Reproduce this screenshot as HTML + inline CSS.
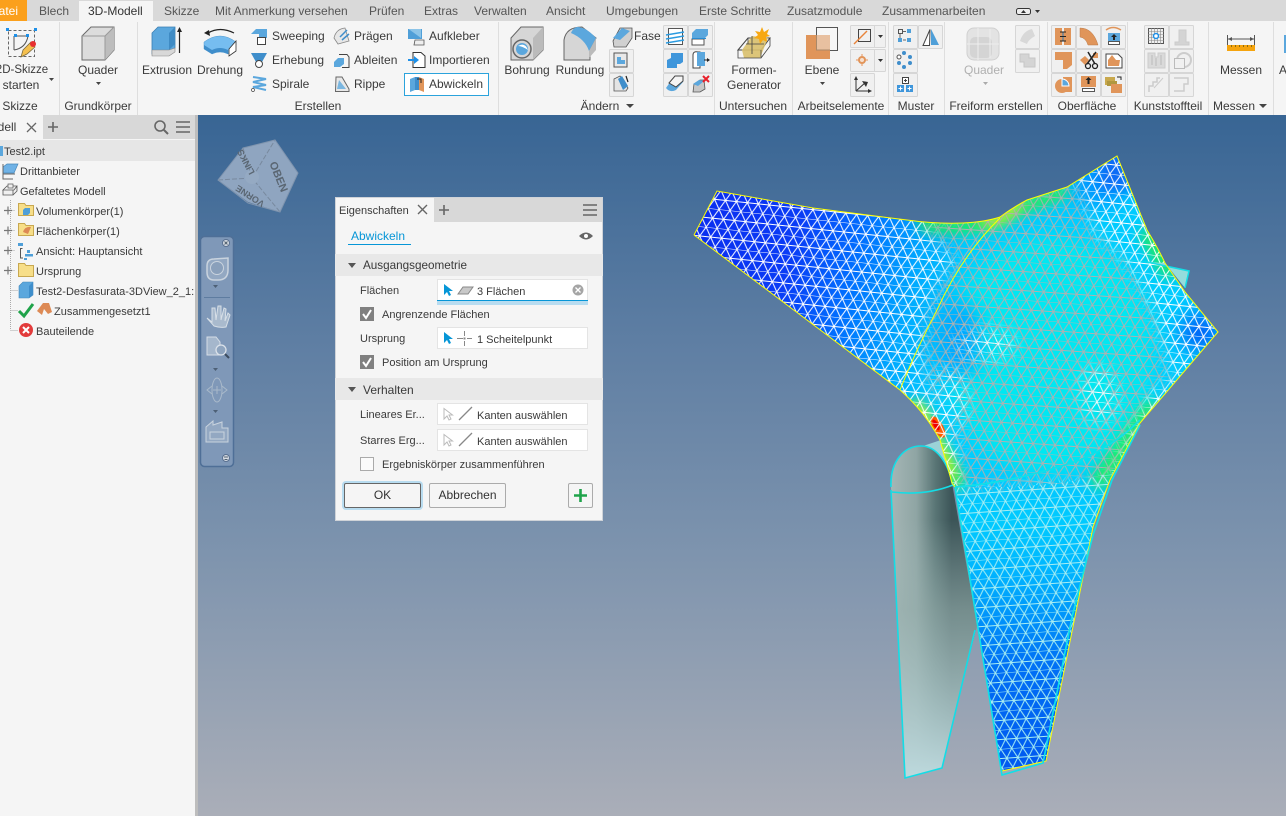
<!DOCTYPE html>
<html><head><meta charset="utf-8">
<style>
html,body{margin:0;padding:0;width:1286px;height:816px;overflow:hidden;background:#f5f5f5}
*{box-sizing:border-box}
body{position:relative;font-family:"Liberation Sans",sans-serif;font-size:12px;color:#3a3a3a}
.a{position:absolute}
.t{position:absolute;white-space:nowrap;line-height:16px;height:16px}
.s{font-size:11px;margin-top:1px}
.c{transform:translateX(-50%)}
.tab{color:#555}
.sec{position:absolute;left:335px;width:268px;height:22px;background:#e8e8e8}
.inp{position:absolute;left:437px;width:151px;height:22px;background:#fff;border:1px solid #e4e4e4}
.btn{position:absolute;background:#f5f5f5;border:1px solid #ababab;border-radius:2px;text-align:center;line-height:23px;height:25px;color:#333}
svg{position:absolute;left:0;top:0;overflow:hidden}
</style></head><body>

<!-- viewport background -->
<div class="a" style="left:198px;top:115px;width:1088px;height:701px;background:linear-gradient(#386594 0%,#5e7ea3 32%,#7b92ad 60%,#aaaeb8 100%)"></div>
<div class="a" style="left:195px;top:115px;width:3px;height:701px;background:#bdbdbd"></div>

<svg width="1286" height="816" viewBox="0 0 1286 816">
<defs>
<clipPath id="mc"><path d="M717,191 L813,208 L907,220 Q935,224 963,223 Q985,222 1000,217 Q1012,208 1027,200 L1067,187 L1117,156 L1147,230 Q1158,248 1165,263 L1185,292 L1218,332 L1140,423 L1110,480 L1093,527 L1046,761 L1002,771 L955,487 L952,483 L940,440 Q925,412 900,390 L694,235 Z"/></clipPath>
<linearGradient id="wg" gradientUnits="userSpaceOnUse" x1="700" y1="230" x2="960" y2="300">
<stop offset="0" stop-color="#0a2ef0"/><stop offset=".35" stop-color="#0a3cf6"/><stop offset=".6" stop-color="#0072ff"/><stop offset=".82" stop-color="#00aaff"/><stop offset="1" stop-color="#00ccff"/></linearGradient>
<linearGradient id="sg" gradientUnits="userSpaceOnUse" x1="0" y1="490" x2="0" y2="770">
<stop offset="0" stop-color="#00d8ff"/><stop offset=".3" stop-color="#00b4ff"/><stop offset=".62" stop-color="#0070f5"/><stop offset="1" stop-color="#0058f0"/></linearGradient>
<filter id="b6" x="-50%" y="-50%" width="200%" height="200%"><feGaussianBlur stdDeviation="6"/></filter>
<filter id="b10" x="-50%" y="-50%" width="200%" height="200%"><feGaussianBlur stdDeviation="10"/></filter>
<pattern id="pw" width="11" height="19" patternUnits="userSpaceOnUse" patternTransform="rotate(6)">
<path d="M0,0H11M0,9.500H11M0,0L5.500,9.500L0,19M11,0L5.500,9.500L11,19" fill="none" stroke="#fff" stroke-width="1"/></pattern>
<pattern id="pg" width="11" height="19" patternUnits="userSpaceOnUse" patternTransform="rotate(4)">
<path d="M0,0H11M0,9.500H11M0,0L5.500,9.500L0,19M11,0L5.500,9.500L11,19" fill="none" stroke="#b0b0b0" stroke-width="1"/></pattern>
<pattern id="pc" width="11" height="19" patternUnits="userSpaceOnUse" patternTransform="rotate(-4)">
<path d="M0,0H11M0,9.500H11M0,0L5.500,9.500L0,19M11,0L5.500,9.500L11,19" fill="none" stroke="#a8eef2" stroke-width="1"/></pattern>
<mask id="mg" maskUnits="userSpaceOnUse" x="680" y="140" width="560" height="640">
<rect x="680" y="140" width="560" height="640" fill="#000"/>
<g filter="url(#b6)">
<ellipse cx="1040" cy="350" rx="115" ry="130" fill="#fff"/>
<path d="M925,225 L1075,180 L1100,250 L1000,310Z" fill="#fff"/>
<path d="M1130,400L1150,300L1170,380Z" fill="#fff"/>
<path d="M960,440L1130,430L1110,480L960,490Z" fill="#fff"/>
<ellipse cx="950" cy="400" rx="14" ry="30" fill="#000"/>
<ellipse cx="1098" cy="395" rx="16" ry="24" fill="#000"/>
<ellipse cx="985" cy="345" rx="26" ry="12" fill="#000"/>
</g></mask>
<mask id="mw" maskUnits="userSpaceOnUse" x="680" y="140" width="560" height="640">
<rect x="680" y="140" width="560" height="640" fill="#fff"/>
<g filter="url(#b6)">
<ellipse cx="1040" cy="350" rx="115" ry="130" fill="#000"/>
<path d="M925,225 L1075,180 L1100,250 L1000,310Z" fill="#000"/>
<path d="M1130,400L1150,300L1170,380Z" fill="#000"/>
<path d="M960,440L1130,430L1110,480L960,490Z" fill="#000"/>
<ellipse cx="950" cy="400" rx="14" ry="30" fill="#fff"/>
<ellipse cx="1098" cy="395" rx="16" ry="24" fill="#fff"/>
<ellipse cx="985" cy="345" rx="26" ry="12" fill="#fff"/>
</g>
<path d="M945,487 Q1060,490 1120,470 L1120,780 L990,780Z" fill="#000"/>
</mask>
<linearGradient id="cy" gradientUnits="userSpaceOnUse" x1="890" y1="0" x2="965" y2="0">
<stop offset="0" stop-color="#a6b7b6"/><stop offset=".35" stop-color="#8fa5a4"/><stop offset=".6" stop-color="#5a7676"/><stop offset=".82" stop-color="#3c5558"/><stop offset="1" stop-color="#3d5658"/></linearGradient>
<linearGradient id="cy2" gradientUnits="userSpaceOnUse" x1="0" y1="520" x2="0" y2="775">
<stop offset="0" stop-color="#a4bcbc" stop-opacity="0"/><stop offset=".35" stop-color="#9ab2b0" stop-opacity=".6"/><stop offset="1" stop-color="#bcd8dc" stop-opacity="1"/></linearGradient>
<rect id="b" width="24" height="23" rx="1" fill="#f0f0f0" stroke="#d6d6d6"/>
</defs>

<!-- shaded cylinder -->
<path d="M923,446 L941,440 L955,487 L945,470Z" fill="#9bd3d7"/>
<path d="M891,487 C890,460 905,446 921,446 C936,446 948,462 952,483 L977,625 L942,768 L905,778 Z" fill="url(#cy)"/>
<path d="M891,487 C890,460 905,446 921,446 C936,446 948,462 952,483 L977,625 L942,768 L905,778 Z" fill="url(#cy2)"/>
<path d="M891,487 C890,460 905,446 921,446 C936,446 948,462 952,483 L955,487 M891,490 L905,778 L942,768 L975,630" fill="none" stroke="#13dde6" stroke-width="1.600"/>
<path d="M892,492 Q925,496 953,485" fill="none" stroke="#13dde6" stroke-width="1.600"/>

<!-- mesh surface -->
<g clip-path="url(#mc)">
<rect x="680" y="140" width="560" height="660" fill="url(#wg)"/>
<g filter="url(#b10)">
<rect x="960" y="160" width="280" height="340" fill="#00ccff"/>
<path d="M935,480 L1140,460 L1060,790 L990,790Z" fill="#00c8ff"/>
<ellipse cx="1050" cy="355" rx="105" ry="120" fill="#00e8f2"/>
<ellipse cx="1100" cy="180" rx="30" ry="28" fill="#0098ff"/>
<ellipse cx="1200" cy="332" rx="22" ry="22" fill="#0060f8"/>
<ellipse cx="960" cy="340" rx="22" ry="40" fill="#00a8ff"/>
</g>
<rect x="940" y="515" width="190" height="270" fill="url(#sg)" filter="url(#b6)"/>
<path d="M1100,150 L1125,150 L1132,190 L1100,190Z" fill="#0a6cf5" filter="url(#b6)"/>
<g filter="url(#b6)" fill="none" stroke-linecap="round">
<path d="M925,224 Q975,232 1005,216" stroke="#22ee55" stroke-width="14"/>
<path d="M1000,216 L1062,192" stroke="#33ee44" stroke-width="12"/>
<path d="M1147,235 L1168,272" stroke="#22ee44" stroke-width="12"/>
<path d="M1150,410 L1100,480" stroke="#22ee66" stroke-width="18"/>
<path d="M915,410 L955,480" stroke="#55f040" stroke-width="18"/>
</g>
<g filter="url(#b6)" fill="none" stroke-linecap="round">
<path d="M985,222 Q1005,218 1018,204" stroke="#e8f020" stroke-width="9"/>
<path d="M918,408 L948,470" stroke="#eef020" stroke-width="9"/>
</g>
<ellipse cx="938" cy="427" rx="5" ry="12" transform="rotate(-30 938 427)" fill="#ff5a00"/>
<ellipse cx="936" cy="425" rx="2.500" ry="6" transform="rotate(-30 936 425)" fill="#f00000"/>
<rect x="680" y="140" width="560" height="660" fill="url(#pw)" mask="url(#mw)"/>
<rect x="680" y="140" width="560" height="660" fill="url(#pg)" mask="url(#mg)"/>
<path d="M945,487 Q1060,490 1120,470 L1120,780 L990,780Z" fill="url(#pc)"/>
</g>

<!-- small teal fan on right corner -->
<path d="M1147,262 L1189,271 L1185,288 L1165,263Z" fill="#95dcdc"/>
<path d="M1147,262 L1189,271 L1185,288" fill="none" stroke="#13dde6" stroke-width="1.500"/>
<path d="M1147,262 Q1090,255 1065,265" fill="none" stroke="#10e2ea" stroke-width="1" opacity=".6"/>

<!-- outlines -->
<path d="M694,235 L717,191 L813,208 L907,220 Q935,224 963,223 Q985,222 1000,217 Q1012,208 1027,200 L1067,187 L1117,156 L1147,230 Q1158,248 1165,263 L1185,292 L1218,332 L1140,423 L1110,480 L1093,527 L1046,761 L1002,771 M955,487 L952,483 L940,440 Q925,412 900,390 L694,235" fill="none" stroke="#ffff00" stroke-width="1"/>
<path d="M1000,218 Q962,255 937,310 Q915,352 900,390" fill="none" stroke="#ffff00" stroke-width="1"/>
<path d="M955,487 Q1013,483 1080,460 Q1115,445 1140,420" fill="none" stroke="#10e0e8" stroke-width="1.600"/>
<path d="M955,487 L1002,775 L1043,763 L1072,617 L1093,535 L1112,480 L1140,425" fill="none" stroke="#10e0e8" stroke-width="1.600"/>

<!-- view cube -->
<g>
<path d="M218,180 L243,148 L275,140 L298,173 L280,212 L248,202Z" fill="#8fa5c0"/>
<path d="M243,148 L252,178 L280,212 M218,180 L252,178 L275,140" fill="none" stroke="#78899e" stroke-width="1" stroke-dasharray="5 2"/>
<path d="M218,180 L243,148 L275,140 L298,173 L280,212 L248,203Z" fill="none" stroke="#7f94ae" stroke-width="1"/>
<circle cx="252" cy="177" r="7" fill="#95aac3"/>
<text x="278" y="177" transform="rotate(68 278 177)" text-anchor="middle" dominant-baseline="central" font-size="11" font-weight="bold" fill="#5a6672" font-family="Liberation Sans">OBEN</text>
<text x="246" y="162" transform="rotate(-118 246 162)" text-anchor="middle" dominant-baseline="central" font-size="9" font-weight="bold" fill="#5a6672" font-family="Liberation Sans">LINKS</text>
<text x="250" y="196" transform="rotate(213 250 196)" text-anchor="middle" dominant-baseline="central" font-size="9" font-weight="bold" fill="#5a6672" font-family="Liberation Sans">VORNE</text>
</g>

<!-- nav bar -->
<g>
<rect x="200.500" y="236.500" width="33" height="230" rx="4" fill="#7f98b8" stroke="#4f6f97" stroke-width="1.500"/>
<circle cx="226" cy="243" r="3.500" fill="#d7dde4" stroke="#5a7090"/>
<path d="M224.500,241.500l3,3m0,-3l-3,3" stroke="#50606f" stroke-width="1"/>
<path d="M207,266 Q207,259 214,259 L228,258 L228,270 Q228,280 218,280 L214,280 Q207,280 207,272Z" fill="#93a8c2" stroke="#c9d3de" stroke-width="1.500"/>
<circle cx="217" cy="268" r="6.500" fill="#8aa0bb" stroke="#c9d3de"/>
<path d="M213,285h5l-2.500,3z" fill="#4d6076"/>
<path d="M204,297.500H230" stroke="#5e7ca0"/>
<path d="M207,318 L212,322 L212,308 L215,308 L216,320 L218,306 L221,306 L221,320 L224,308 L226,309 L225,321 L228,313 L230,315 L226,327 Q220,328 214,326Z" fill="#a9bacd" stroke="#d7dfe7" stroke-width="1"/>
<path d="M207,337 H216 L220,342 V355 H207Z" fill="#a5b7cc" stroke="#d5dde6"/>
<circle cx="221" cy="350" r="5" fill="#8fa5bf" stroke="#dbe2ea" stroke-width="1.300"/>
<path d="M225,354l4,4" stroke="#3d4d60" stroke-width="2"/>
<path d="M213,368h5l-2.500,3z" fill="#4d6076"/>
<ellipse cx="217" cy="390" rx="5" ry="12" fill="none" stroke="#a9b9ca"/><path d="M212,386 L207,390 L212,394 M222,386 L227,390 L222,394 M217,386V394M213,390H221" fill="none" stroke="#a9b9ca"/>
<path d="M213,410h5l-2.500,3z" fill="#4d6076"/>
<path d="M206,427 L213,421 V425 L222,422 V428 H228 V442 H206Z" fill="#93a8c2" stroke="#c9d3de"/>
<rect x="210" y="432" width="14" height="7" fill="none" stroke="#c9d3de"/>
<circle cx="226" cy="458" r="3.500" fill="#d7dde4" stroke="#5a7090"/>
<path d="M224,457h4M224.500,459.500h3" stroke="#50606f"/>
</g>
</svg>

<!-- ribbon -->
<div class="a" style="left:0;top:0;width:1286px;height:21px;background:#d9d9d9"></div>
<div class="a" style="left:0;top:21px;width:1286px;height:94px;background:#f5f5f5"></div>
<div class="a" style="left:0;top:0;width:27px;height:21px;background:#fba01c"></div>
<div class="t" style="left:-10px;top:3px;color:#fff">Datei</div>
<div class="a" style="left:79px;top:1px;width:74px;height:21px;background:#f5f5f5"></div>
<div class="t tab" style="left:39px;top:3px">Blech</div>
<div class="t" style="left:88px;top:3px;color:#333">3D-Modell</div>
<div class="t tab" style="left:164px;top:3px">Skizze</div>
<div class="t tab" style="left:215px;top:3px">Mit Anmerkung versehen</div>
<div class="t tab" style="left:369px;top:3px">Prüfen</div>
<div class="t tab" style="left:424px;top:3px">Extras</div>
<div class="t tab" style="left:474px;top:3px">Verwalten</div>
<div class="t tab" style="left:546px;top:3px">Ansicht</div>
<div class="t tab" style="left:606px;top:3px">Umgebungen</div>
<div class="t tab" style="left:699px;top:3px">Erste Schritte</div>
<div class="t tab" style="left:787px;top:3px">Zusatzmodule</div>
<div class="t tab" style="left:882px;top:3px">Zusammenarbeiten</div>

<svg width="1286" height="115" viewBox="0 0 1286 115" style="height:115px">
<rect x="1016.500" y="8.500" width="14" height="6" rx="2" fill="#eee" stroke="#333"/><path d="M1021,13l2.500,-3l2.500,3z" fill="#333"/><path d="M1035,10h5l-2.500,3z" fill="#333"/>
<g stroke="#dedede"><path d="M59.500,22V115M137.500,22V115M498.500,22V115M714.500,22V115M792.500,22V115M888.500,22V115M944.500,22V115M1047.500,22V115M1127.500,22V115M1208.500,22V115M1273.500,22V115"/></g>

<!-- 2D Skizze -->
<rect x="8.500" y="30.500" width="26" height="26" fill="none" stroke="#666" stroke-dasharray="3 2"/>
<path d="M14,36 H28 M14,36 V50 M14,50 Q26,48 28,36" fill="none" stroke="#555"/>
<g fill="#1e90e8"><rect x="6" y="28" width="3" height="3"/><rect x="14" y="34" width="3" height="3"/><rect x="26" y="34" width="3" height="3"/><rect x="34" y="28" width="3" height="3"/></g>
<path d="M21,57 L23,50 L31,42 L35,47 L27,54Z" fill="#f5c04e" stroke="#7a6a40" stroke-width=".8"/>
<circle cx="33" cy="44" r="3" fill="#e73030"/>
<path d="M49,78h5l-2.500,3z" fill="#444"/>

<!-- Quader -->
<path d="M82,36 L91,27 H114 V50 L105,60 H82Z" fill="#dcdcdc" stroke="#6a6a6a"/>
<path d="M105,36 L114,27 V50 L105,60Z" fill="#bdbdbd"/>
<path d="M105,36 H82 M105,36 V60 M105,36 L114,27" fill="none" stroke="#9a9a9a"/>
<path d="M96,82h5l-2.500,3z" fill="#444"/>

<!-- Extrusion -->
<path d="M152,50 L152,33 L158,27 L175,27 L175,48 L169,54 L152,54Z" fill="#5ba7dd" stroke="#3b7fb3" stroke-width=".8"/>
<path d="M169,33 V50 L175,44 V27Z" fill="#3f8bc4"/>
<path d="M152,50 H169 L175,48 V52 L169,56 H152Z" fill="#d8d8d8" stroke="#888" stroke-width=".6"/>
<path d="M179.500,53 V30" stroke="#222" stroke-width="1.200"/><path d="M177,32 L179.500,27 L182,32Z" fill="#222"/>

<!-- Drehung -->
<path d="M208,33 Q220,26 234,33" fill="none" stroke="#222" stroke-width="1.200"/><path d="M209,30 L204,33 L210,36Z" fill="#222"/>
<path d="M204,42 Q220,30 236,42 V45 L228,54 Q220,50 212,54 L204,49Z" fill="#76bdf0" stroke="#5a9dd0" stroke-width=".5"/>
<path d="M204,49 L212,54 Q220,50 228,54 L228,50 Q220,46 212,50 L204,45Z" fill="#3f8ecb"/>
<path d="M229,49 L236,41 V51 L229,56Z" fill="#fff" stroke="#333" stroke-width=".8"/>

<!-- small icons -->
<path d="M251,34 L256,29 H267 V38 H259 V34Z" fill="#5ba7dd"/><rect x="257.500" y="37.500" width="8" height="7" fill="#fff" stroke="#444"/>
<path d="M251,53 H267 L262,62 H256Z" fill="#3f8ecb"/><circle cx="259" cy="64" r="3.500" fill="#fff" stroke="#444"/>
<path d="M253,77 L266,79 L253,82 L266,85 L253,87 L266,90" fill="none" stroke="#5ba7dd" stroke-width="2"/><circle cx="253" cy="90" r="1.500" fill="#fff" stroke="#444" stroke-width=".7"/>
<path d="M334,38 Q336,29 345,28 L349,41 L338,44Z" fill="#e7e7e7" stroke="#888" stroke-width=".8"/><path d="M340,37 L347,30 M342,40 L349,34" stroke="#3f8ecb" stroke-width="1.500"/>
<path d="M339,54.500 H347 L349,57 V67.500 H342" fill="none" stroke="#444"/><path d="M334,62 L338,58 H344 V64 L340,67 H334Z" fill="#5ba7dd"/>
<path d="M335.500,91.500 L336,77 H342 L349,89 V91.500Z" fill="#e8e8e8" stroke="#666"/><path d="M339,80 L346,89 H337Z" fill="#7ab6e0"/>
<rect x="408" y="29" width="14" height="10" fill="#4f9fd8"/><path d="M408.500,29 L421,29 L421,38Z" fill="#8cc4e8"/><path d="M415,40 H424 V45 H418 L414,45Z" fill="#eee" stroke="#555" stroke-width=".8"/>
<path d="M413,52.500 H421 L425,56 V67.500 H413Z" fill="#fff" stroke="#333"/><path d="M408,60 H416" stroke="#1e90e8" stroke-width="2"/><path d="M414,56 L419,60 L414,64Z" fill="#1e90e8"/>
<rect x="404.500" y="73.500" width="84" height="22" fill="#fff" stroke="#2ba3dc"/>
<path d="M410,79 L415,77 V90 L410,92Z" fill="#5ba7dd"/><path d="M415,77 H419 V90 H415Z" fill="#3f8ecb"/><path d="M419,77 L424,79 V92 L419,90Z" fill="#e0955a"/><path d="M417,79h4v4" stroke="#222" fill="none"/>

<!-- Bohrung -->
<path d="M511,38 L521,27 H543 V50 L533,60 H511Z" fill="#d6d6d6" stroke="#666"/><path d="M533,38 L543,27 V50 L533,60Z" fill="#bbb"/>
<circle cx="522" cy="49" r="9" fill="#d6d6d6" stroke="#666" stroke-width="1.500"/><circle cx="522" cy="49" r="6" fill="#5ba7dd"/><path d="M518,46 Q525,42 528,50 Q522,46 518,46" fill="#fff"/>
<!-- Rundung -->
<path d="M564,60 V40 Q566,27 582,27 L596,38 L590,50 V60Z" fill="#d6d6d6" stroke="#666"/>
<path d="M577,27 Q586,27 596,38 L589,51 Q585,39 571,33 Q573,28 577,27Z" fill="#5ba7dd"/>
<path d="M589,51 L596,38 V50 L589,58Z" fill="#bbb"/>
<!-- Fase -->
<path d="M613,41 L620,28 H632 V38 L626,47 H614Z" fill="#d0d0d0" stroke="#555" stroke-width=".8"/><path d="M613,38 L622,28 L630,31 L620,40Z" fill="#5ba7dd"/>
<use href="#b" x="609.500" y="49.500"/><use href="#b" x="609.500" y="73.500"/>
<rect x="614" y="53" width="13" height="14" fill="#e8e8e8" stroke="#555"/><path d="M617,57 V64 H625 V60 H621 V57Z" fill="#5ba7dd"/>
<path d="M614,91 V79 L620,76 L628,88 L626,91Z" fill="#e4e4e4" stroke="#555" stroke-width=".8"/><path d="M618,79 L622,76 L628,86 L623,90Z" fill="#3f8ecb"/><path d="M626,76 L628,82" stroke="#222" stroke-width="1.200"/>
<!-- grid -->
<use href="#b" x="663.500" y="25.500"/><use href="#b" x="688.500" y="25.500"/><use href="#b" x="663.500" y="49.500"/><use href="#b" x="688.500" y="49.500"/><use href="#b" x="663.500" y="73.500"/><use href="#b" x="688.500" y="73.500"/>
<rect x="668.500" y="28.500" width="14" height="16" fill="#fff" stroke="#555"/><path d="M666,35 L684,32 M666,39 L684,36 M666,43 L684,40" stroke="#2b9be0" stroke-width="1.400"/>
<path d="M692,33 L696,29 H708 V35 L704,39 H692Z" fill="#5ba7dd"/><path d="M692,39 H704 V45 H692Z" fill="#fff" stroke="#555"/><path d="M692,38.500H706" stroke="#2b8bd0"/>
<path d="M667,60 L671,58 V53 H683 V62 L680,64 H677 V68 H667Z" fill="#3f96db"/>
<path d="M693,68 V55 Q693,51 698,52 H700 V68Z" fill="#fff" stroke="#444"/><rect x="697" y="52" width="8" height="14" fill="#5ba7dd"/><path d="M704,60h5" stroke="#222"/><path d="M707,58l3,2l-3,2z" fill="#222"/>
<path d="M666,88 L673,78 H683 V82 L676,90 Q670,93 666,88Z" fill="#5ba7dd"/><path d="M669,83 L675,76 H683 V81 L676,87Z" fill="#f4f4f4" stroke="#444"/>
<path d="M693,92 L694,84 L700,80 H704 L705,89 L700,92Z" fill="#c7c7c7" stroke="#555" stroke-width=".8"/><path d="M693,84 L699,80 L704,81 L698,86Z" fill="#5ba7dd"/><path d="M703,76 L709,82 M709,76 L703,82" stroke="#e8202a" stroke-width="2"/>

<!-- Formen-Generator -->
<path d="M738,50 L748,38 H770 L761,50Z" fill="none" stroke="#444"/>
<path d="M742,50 L752,36 L768,38 L760,58 H744Z" fill="#d9c06c" opacity=".9"/>
<path d="M738,50 V58 H761 V50 M761,58 L770,46 V38 M748,38 V44 M746,44 L764,44 M752,36 L752,54" fill="none" stroke="#444" stroke-width=".8"/>
<path d="M762,27 L764,32 L769,29 L767,34 L770,36 L766,37 L767,42 L763,40 L760,44 L759,39 L754,38 L758,35 L755,31 L760,32Z" fill="#f7a812"/>

<!-- Ebene -->
<rect x="816.500" y="27.500" width="21" height="23" fill="#f7f7f7" stroke="#555"/>
<rect x="806" y="35" width="24" height="24" fill="#e0955a"/><rect x="816" y="35" width="14" height="15" fill="#e8c0a0"/><path d="M816.500,35V50H830" stroke="#aa8868" fill="none"/>
<path d="M820,82h5l-2.500,3z" fill="#444"/>
<rect x="850.500" y="25.500" width="35" height="22" rx="1" fill="#f0f0f0" stroke="#d6d6d6"/><path d="M874.500,25.500V47.500" stroke="#d6d6d6"/>
<rect x="850.500" y="49.500" width="35" height="22" rx="1" fill="#f0f0f0" stroke="#d6d6d6"/><path d="M874.500,49.500V71.500" stroke="#d6d6d6"/>
<use href="#b" x="850.500" y="73.500"/>
<path d="M878,35h5l-2.500,3zM878,59h5l-2.500,3z" fill="#333"/>
<rect x="858.500" y="29.500" width="12" height="12" fill="none" stroke="#444"/><path d="M854,44 L867,31" stroke="#e8833a" stroke-width="1.400"/>
<circle cx="862" cy="60" r="4" fill="#e0955a"/><path d="M856,60H868M862,54V66" stroke="#e8955a"/><circle cx="862" cy="60" r="2" fill="#f5e0d0"/>
<path d="M856,91 V78 M856,91 H869 M856,91 L866,82" stroke="#333" fill="none"/><path d="M854,80l2,-4l2,4zM868,89l4,2l-4,2z" fill="#333"/><path d="M862,81l6,1l-2,5z" fill="#333"/>

<!-- Muster -->
<use href="#b" x="893.500" y="25.500"/><use href="#b" x="918.500" y="25.500"/><use href="#b" x="893.500" y="49.500"/><use href="#b" x="893.500" y="73.500"/>
<g fill="#4f9fd8"><rect x="907" y="29" width="4" height="4"/><rect x="898" y="38" width="4" height="4"/><rect x="907" y="38" width="4" height="4"/></g>
<rect x="898.500" y="29.500" width="4" height="4" fill="none" stroke="#555"/><path d="M903,31.500H906M903,40H906M900,34V38" stroke="#666"/>
<path d="M930,29.500 L923,45.500 H929.500Z" fill="#fff" stroke="#444"/><path d="M931,29 L939,45 H931Z" fill="#4f9fd8"/>
<g fill="#3f8ecb"><circle cx="904" cy="53" r="2"/><circle cx="910" cy="57" r="2"/><circle cx="910" cy="63" r="2"/><circle cx="904" cy="67" r="2"/><circle cx="899" cy="63" r="2"/></g><circle cx="899" cy="57" r="2" fill="#fff" stroke="#555"/>
<rect x="902.500" y="77.500" width="6" height="6" fill="#fff" stroke="#444"/><path d="M904,80.500h3M905.500,79v3" stroke="#444"/>
<rect x="897" y="85" width="7" height="7" fill="#3f96db"/><rect x="906" y="85" width="7" height="7" fill="#3f96db"/><path d="M898.500,88.500h4M900.500,86.500v4M907.500,88.500h4M909.500,86.500v4" stroke="#fff"/>

<!-- Freiform -->
<rect x="967" y="28" width="32" height="32" rx="7" fill="#e3e3e3" stroke="#d0d0d0"/>
<rect x="970" y="37" width="22" height="21" rx="5" fill="#d4d4d4"/><path d="M978,28V60M967,44H999M990,29V58" stroke="#eee"/>
<path d="M983,82h5l-2.500,3z" fill="#aaa"/>
<use href="#b" x="1015.500" y="25.500"/><use href="#b" x="1015.500" y="49.500"/>
<path d="M1020,41 Q1023,31 1032,29 L1035,36 Q1028,40 1027,44Z" fill="#d8d8d8"/>
<path d="M1020,54 H1029 V58 H1035 V67 H1024 V62 H1020Z" fill="#d4d4d4" stroke="#c6c6c6"/>

<!-- Oberflaeche -->
<use href="#b" x="1051.500" y="25.500"/><use href="#b" x="1076.500" y="25.500"/><use href="#b" x="1101.500" y="25.500"/>
<use href="#b" x="1051.500" y="49.500"/><use href="#b" x="1076.500" y="49.500"/><use href="#b" x="1101.500" y="49.500"/>
<use href="#b" x="1051.500" y="73.500"/><use href="#b" x="1076.500" y="73.500"/><use href="#b" x="1101.500" y="73.500"/>
<rect x="1055" y="28" width="16" height="17" fill="#e0955a"/><path d="M1063,28V45" stroke="#f0f0f0" stroke-width="2"/><path d="M1060,32h6M1063,32V41M1060,41h6M1060,36.500h6" stroke="#222"/>
<path d="M1080,28 Q1093,28 1098,45 H1088 Q1086,38 1080,37Z" fill="#e0955a" stroke="#bb7a48" stroke-width=".5"/>
<rect x="1108" y="33" width="12" height="9" fill="#5ba7dd"/><path d="M1106,30 Q1113,25 1121,30" stroke="#e0955a" fill="none" stroke-width="1.500"/><path d="M1114,34 l-3,3h2v3h2v-3h2z" fill="#222"/><rect x="1108.500" y="41.500" width="11" height="3" fill="#fff" stroke="#555"/>
<path d="M1055,52 H1072 V65 L1067,69 H1063 V60 H1055Z" fill="#e0955a"/>
<path d="M1080,60 L1085,56 L1089,60 L1085,65Z" fill="#e0955a"/><rect x="1093" y="53" width="5" height="5" fill="#e0955a"/><path d="M1088,52 L1095,64 M1096,52 L1087,64" stroke="#222" stroke-width="1.500"/><circle cx="1088" cy="66" r="2.500" fill="none" stroke="#222" stroke-width="1.300"/><circle cx="1095" cy="66" r="2.500" fill="none" stroke="#222" stroke-width="1.300"/>
<path d="M1106,54 H1118 L1122,58 V68 H1106Z" fill="#fff" stroke="#444"/><path d="M1108,66 V60 L1112,55 L1116,60 H1120 L1119,66Z" fill="#e0955a"/>
<rect x="1063" y="77" width="9" height="14" fill="#e0955a"/><path d="M1063,77 H1072 V92 H1058 V86 H1063Z" fill="#e0955a"/><circle cx="1062" cy="86" r="7" fill="#e0955a"/><path d="M1062,79 A7,7 0 0 1 1069,86 H1062Z" fill="#5ba7dd" stroke="#fff"/>
<rect x="1081" y="76" width="15" height="11" fill="#e0955a"/><path d="M1088.500,77 l-3,3h2v4h2v-4h2z" fill="#222"/><rect x="1082.500" y="88.500" width="12" height="3" fill="#fff" stroke="#555"/>
<rect x="1105" y="77" width="10" height="8" fill="#c9a94e"/><rect x="1107" y="81" width="10" height="5" fill="#b0973f"/><rect x="1111" y="84" width="11" height="9" fill="#e0955a"/><path d="M1117,77h4v3" stroke="#222" fill="none"/>

<!-- Kunststoff -->
<use href="#b" x="1144.500" y="25.500"/><use href="#b" x="1169.500" y="25.500"/><use href="#b" x="1144.500" y="49.500"/><use href="#b" x="1169.500" y="49.500"/><use href="#b" x="1144.500" y="73.500"/><use href="#b" x="1169.500" y="73.500"/>
<rect x="1148.500" y="28.500" width="15" height="15" fill="none" stroke="#555"/><path d="M1151.500,28V44M1154.500,28V44M1157.500,28V44M1160.500,28V44M1148,31.500H1164M1148,34.500H1164M1148,37.500H1164M1148,40.500H1164" stroke="#888" stroke-width=".6"/><circle cx="1156" cy="36" r="2.500" fill="#fff" stroke="#1e90e8" stroke-width="1.500"/>
<path d="M1175,45 V42 H1179 V30 H1186 V42 H1189 V45Z" fill="#d4d4d4" stroke="#ccc"/>
<path d="M1148,68 V53 H1155 V57 H1158 V53 H1165 V68Z" fill="#dadada" stroke="#ccc"/><path d="M1152,55V65M1161,55V65M1156,58V66" stroke="#bbb"/>
<circle cx="1184" cy="60" r="7" fill="none" stroke="#ccc" stroke-width="2"/><rect x="1174.500" y="58.500" width="10" height="10" fill="#f0f0f0" stroke="#bbb"/>
<path d="M1149,92 V86 H1153 V82 H1157 V78 H1160" fill="none" stroke="#ccc" stroke-width="1.500"/><path d="M1154,88 L1163,78" stroke="#ccc"/>
<path d="M1174,78 H1188 V84 H1184 V91 H1174" fill="none" stroke="#ccc" stroke-width="1.500"/>

<!-- Messen -->
<path d="M1227.500,35V50M1254.500,35V50" stroke="#555"/><path d="M1228,39H1254" stroke="#555"/><path d="M1228,39l4,-2v4zM1254,39l-4,-2v4z" fill="#555"/>
<rect x="1227" y="45" width="28" height="6" fill="#f5a40e"/><path d="M1231.500,45v2M1235.500,45v2M1239.500,45v2M1243.500,45v2M1247.500,45v2M1251.500,45v2" stroke="#8a6a10"/>
<rect x="1284" y="35" width="2" height="18" fill="#5ba7dd"/>
<path d="M626,104h8l-4,4z" fill="#444"/><path d="M1259,104h8l-4,4z" fill="#444"/>
</svg>

<!-- ribbon labels -->
<div class="t c" style="left:22px;top:62px;font-size:11.500px">2D-Skizze</div>
<div class="t c" style="left:21px;top:77px">starten</div>
<div class="t c" style="left:20px;top:98px">Skizze</div>
<div class="t c" style="left:98px;top:62px">Quader</div>
<div class="t c" style="left:98px;top:98px">Grundkörper</div>
<div class="t c" style="left:167px;top:62px">Extrusion</div>
<div class="t c" style="left:220px;top:62px">Drehung</div>
<div class="t" style="left:272px;top:28px">Sweeping</div>
<div class="t" style="left:272px;top:52px">Erhebung</div>
<div class="t" style="left:272px;top:76px">Spirale</div>
<div class="t" style="left:354px;top:28px">Prägen</div>
<div class="t" style="left:354px;top:52px">Ableiten</div>
<div class="t" style="left:354px;top:76px">Rippe</div>
<div class="t" style="left:429px;top:28px">Aufkleber</div>
<div class="t" style="left:429px;top:52px">Importieren</div>
<div class="t" style="left:429px;top:76px">Abwickeln</div>
<div class="t c" style="left:318px;top:98px">Erstellen</div>
<div class="t c" style="left:527px;top:62px">Bohrung</div>
<div class="t c" style="left:580px;top:62px">Rundung</div>
<div class="t" style="left:634px;top:28px">Fase</div>
<div class="t c" style="left:600px;top:98px">Ändern</div>
<div class="t c" style="left:754px;top:62px">Formen-</div>
<div class="t c" style="left:754px;top:77px">Generator</div>
<div class="t c" style="left:753px;top:98px">Untersuchen</div>
<div class="t c" style="left:822px;top:62px">Ebene</div>
<div class="t c" style="left:841px;top:98px">Arbeitselemente</div>
<div class="t c" style="left:916px;top:98px">Muster</div>
<div class="t c" style="left:984px;top:62px;color:#b0b0b0">Quader</div>
<div class="t c" style="left:996px;top:98px">Freiform erstellen</div>
<div class="t c" style="left:1087px;top:98px">Oberfläche</div>
<div class="t c" style="left:1168px;top:98px">Kunststoffteil</div>
<div class="t c" style="left:1241px;top:62px">Messen</div>
<div class="t c" style="left:1234px;top:98px">Messen</div>
<div class="t" style="left:1279px;top:62px">A</div>

<!-- left browser -->
<div class="a" style="left:0;top:115px;width:195px;height:701px;background:#f5f5f5"></div>
<div class="a" style="left:0;top:115px;width:195px;height:24px;background:#d8d8d8"></div>
<div class="a" style="left:0;top:115px;width:43px;height:24px;background:#f5f5f5"></div>
<div class="a" style="left:0;top:140px;width:195px;height:21px;background:#e6e6e6"></div>
<div class="t" style="left:-19px;top:119px">Modell</div>
<svg width="195" height="345" viewBox="0 0 195 345" style="height:345px;width:195px">
<path d="M27,123l9,9m0,-9l-9,9" stroke="#666" stroke-width="1.300"/>
<path d="M48,127h10M53,122v10" stroke="#666" stroke-width="1.600"/>
<circle cx="160" cy="126" r="5" fill="none" stroke="#666" stroke-width="1.600"/><path d="M164,130l4,4" stroke="#666" stroke-width="2"/>
<path d="M176,122h14M176,127h14M176,132h14" stroke="#666" stroke-width="1.500"/>
<rect x="0" y="146" width="3" height="10" fill="#5ba7dd"/>
<path d="M7.500,210.500 h8 M7.500,230.500 h8 M7.500,250.500 h8 M7.500,270.500 h8 M10.500,290.500 h8 M10.500,310.500 h8 M10.500,330.500 h8 M10.500,200V330" stroke="#aaa" stroke-dasharray="1 1" fill="none"/>
<g stroke="#777" stroke-width="1.200"><path d="M4,210.500h8M8,206.500v8M4,230.500h8M8,226.500v8M4,250.500h8M8,246.500v8M4,270.500h8M8,266.500v8"/></g>
<path d="M3,167 L7,164 H18 L14,173 H3Z" fill="#6fb2e6" stroke="#4a88b8" stroke-width=".7"/><path d="M3,164 V179 H13 M3,174 L15,174" fill="none" stroke="#666"/>
<path d="M3,190 L7,186 H17 L14,190Z M3,190 V195 H13 V190Z M13,195 L17,191 V186" fill="#f0f0f0" stroke="#555" stroke-width=".8"/><rect x="8" y="184" width="5" height="4" fill="#eee" stroke="#555" stroke-width=".7"/>
<g fill="#f7de88" stroke="#c8a850"><path d="M18.500,206.500 V215.500 H33.500 V205.500 H26 L24.500,203.500 H18.500Z"/><path d="M18.500,226.500 V235.500 H33.500 V225.500 H26 L24.500,223.500 H18.500Z"/><path d="M18.500,266.500 V276.500 H33.500 V265.500 H26 L24.500,263.500 H18.500Z"/></g>
<path d="M23,210 L25,208 H30 V213 L28,215 H23Z" fill="#4f9fd8"/>
<path d="M23,232 Q25,226 31,227 L28,234 Z" fill="#dd8a55"/>
<rect x="18" y="243" width="5" height="3" fill="#4f9fd8"/><path d="M22.500,248.500 H20.500 V258 H23" fill="none" stroke="#555"/><rect x="27" y="250" width="3" height="3" fill="#4f9fd8"/><rect x="25" y="254" width="8" height="2.500" fill="#4f9fd8"/><rect x="24" y="258" width="3" height="2" fill="#4f9fd8"/>
<path d="M19,286 L23,282 H33 V295 L29,298 H19Z" fill="#5ba7dd" stroke="#4689bb" stroke-width=".6"/><path d="M29,286 L33,282 V295 L29,298Z" fill="#3f8ecb"/>
<path d="M19,311 L24,316 L33,304" fill="none" stroke="#1fa34a" stroke-width="3"/>
<path d="M37,311 L43,303 H49 L52,312 L48,314 L44,309 L42,315Z" fill="#dd8a55"/>
<circle cx="26" cy="330" r="7" fill="#e23b3b"/><path d="M23,327l6,6m0,-6l-6,6" stroke="#fff" stroke-width="2"/>
</svg>
<div class="t s" style="left:4px;top:143px">Test2.ipt</div>
<div class="t s" style="left:20px;top:163px">Drittanbieter</div>
<div class="t s" style="left:20px;top:183px">Gefaltetes Modell</div>
<div class="t s" style="left:36px;top:203px">Volumenkörper(1)</div>
<div class="t s" style="left:36px;top:223px">Flächenkörper(1)</div>
<div class="t s" style="left:36px;top:243px">Ansicht: Hauptansicht</div>
<div class="t s" style="left:36px;top:263px">Ursprung</div>
<div class="t s" style="left:36px;top:283px;width:158px;overflow:hidden">Test2-Desfasurata-3DView_2_1:1</div>
<div class="t s" style="left:54px;top:303px">Zusammengesetzt1</div>
<div class="t s" style="left:36px;top:323px">Bauteilende</div>

<!-- dialog -->
<div class="a" style="left:335px;top:197px;width:268px;height:324px;background:#f5f5f5;border:1px solid #cfd3d8"></div>
<div class="a" style="left:434px;top:198px;width:168px;height:24px;background:#d8d8d8"></div>
<div class="t s" style="left:339px;top:202px">Eigenschaften</div>
<div class="t" style="left:351px;top:228px;color:#0696d7">Abwickeln</div>
<div class="a" style="left:348px;top:244px;width:63px;height:1px;background:#0696d7"></div>
<div class="sec" style="top:254px"></div>
<div class="t" style="left:363px;top:258px;font-size:11.700px">Ausgangsgeometrie</div>
<div class="t s" style="left:360px;top:282px">Flächen</div>
<div class="inp" style="top:279px;height:22px;border-bottom:0"></div>
<div class="a" style="left:437px;top:300px;width:151px;height:1px;background:#0696d7"></div>
<div class="a" style="left:437px;top:301px;width:151px;height:4px;background:#b8dcf0"></div>
<div class="t s" style="left:477px;top:283px">3 Flächen</div>
<div class="t s" style="left:382px;top:306px">Angrenzende Flächen</div>
<div class="t s" style="left:360px;top:330px">Ursprung</div>
<div class="inp" style="top:327px"></div>
<div class="t s" style="left:477px;top:331px">1 Scheitelpunkt</div>
<div class="t s" style="left:382px;top:354px">Position am Ursprung</div>
<div class="sec" style="top:378px"></div>
<div class="t" style="left:363px;top:382px">Verhalten</div>
<div class="t s" style="left:360px;top:406px">Lineares Er...</div>
<div class="inp" style="top:403px"></div>
<div class="t s" style="left:477px;top:407px">Kanten auswählen</div>
<div class="t s" style="left:360px;top:432px">Starres Erg...</div>
<div class="inp" style="top:429px"></div>
<div class="t s" style="left:477px;top:433px">Kanten auswählen</div>
<div class="t s" style="left:382px;top:456px">Ergebniskörper zusammenführen</div>
<div class="btn" style="left:344px;top:483px;width:77px;box-shadow:0 0 0 2px #b8dcf0;border-color:#666">OK</div>
<div class="btn" style="left:429px;top:483px;width:77px">Abbrechen</div>
<div class="btn" style="left:568px;top:483px;width:25px"></div>

<svg width="1286" height="816" viewBox="0 0 1286 816" style="pointer-events:none">
<path d="M418,205l9,9m0,-9l-9,9" stroke="#666" stroke-width="1.400"/>
<path d="M439,210h10M444,205v10" stroke="#666" stroke-width="1.600"/>
<path d="M583,205h14M583,210h14M583,215h14" stroke="#666" stroke-width="1.600"/>
<path d="M579,236 Q586,229 593,236 Q586,243 579,236Z" fill="#666"/><circle cx="586" cy="236" r="2" fill="#fff"/>
<path d="M348,263h8l-4,5z" fill="#555"/><path d="M348,387h8l-4,5z" fill="#555"/>
<path d="M444,284 V295 L447,292 L449,296 L451,295 L449,291 L453,291Z" fill="#0696d7"/>
<path d="M444,332 V343 L447,340 L449,344 L451,343 L449,339 L453,339Z" fill="#0696d7"/>
<path d="M444,408.500 V419 L447,416 L449,420 L451,419 L449,415 L452.500,415Z" fill="#fff" stroke="#bbb"/>
<path d="M444,434.500 V445 L447,442 L449,446 L451,445 L449,441 L452.500,441Z" fill="#fff" stroke="#bbb"/>
<path d="M458,294 L463,287 H473 L468,294Z" fill="#c8c8c8" stroke="#888"/>
<circle cx="578" cy="290" r="5.500" fill="#a5a5a5"/><path d="M575.500,287.500l5,5m0,-5l-5,5" stroke="#fff" stroke-width="1.300"/>
<path d="M457,338.500h6M467,338.500h5M464.500,331v5M464.500,341v5" stroke="#888"/><rect x="463.500" y="337.500" width="2" height="2" fill="#888"/>
<path d="M459,420 L472,407M459,446 L472,433" stroke="#888" stroke-width="1.300"/>
<rect x="360" y="307" width="14" height="14" fill="#808080"/><path d="M363,314 L366,318 L371,310" fill="none" stroke="#fff" stroke-width="2"/>
<rect x="360" y="355" width="14" height="14" fill="#808080"/><path d="M363,362 L366,366 L371,358" fill="none" stroke="#fff" stroke-width="2"/>
<rect x="360.500" y="457.500" width="13" height="13" fill="#fbfbfb" stroke="#aaa"/>
<path d="M580.500,489V502M574,495.500H587" stroke="#1fa34a" stroke-width="2.600"/>
</svg>

</body></html>
